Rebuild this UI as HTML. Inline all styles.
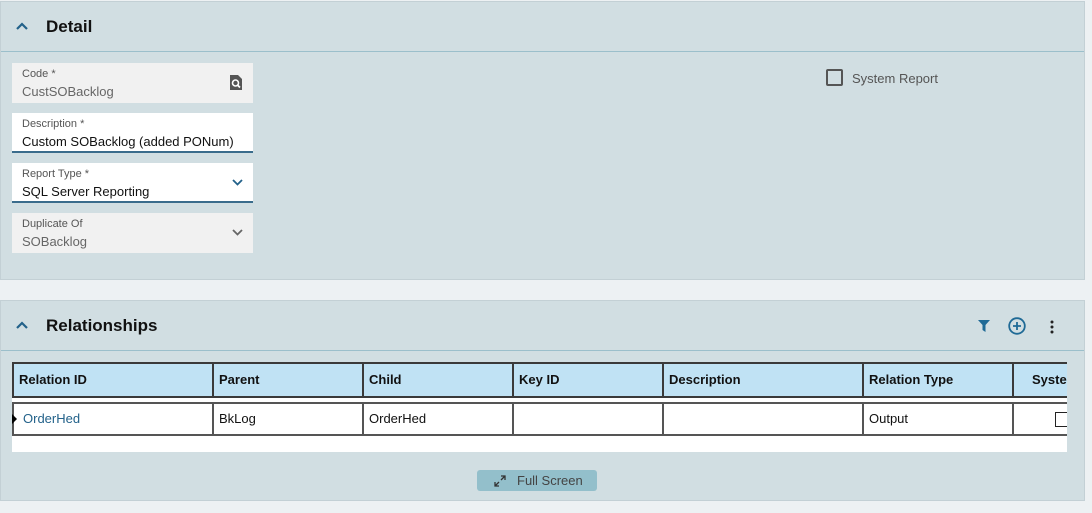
<!DOCTYPE html>
<html><head><style>
*{margin:0;padding:0;box-sizing:border-box}
body{width:1092px;height:513px;background:#edf1f3;font-family:"Liberation Sans",sans-serif;position:relative;overflow:hidden}
.panel{position:absolute;left:0;width:1085px;background:#d1dee2;border:1px solid #c3d0d5}
.hdr{position:absolute;left:0;right:0;top:0;height:50px;border-bottom:1px solid #9bbfcb}
.hdr .t{position:absolute;left:45px;top:15px;font-size:17px;font-weight:bold;color:#111}
.chev{position:absolute;left:15px;top:20px}
.f{position:absolute;left:11px;width:241px;height:40px;background:#fff}
.f.ro{background:#f1f1f1}
.f .l{position:absolute;left:10px;top:5px;font-size:11px;color:#555}
.f .v{position:absolute;left:10px;top:21px;font-size:13px;color:#111}
.f.ro .v{color:#666}
.f.ul{border-bottom:2px solid #3a6c8c}
.dd{position:absolute;right:10px;top:16px}
.row{position:absolute;left:0;width:1200px;border:2px solid #3a3a3a;border-right:none}
.c{position:absolute;top:0;bottom:0;border-left:2px solid #3a3a3a;padding-left:5px;font-size:13px;color:#111;white-space:nowrap}
.c:first-child{border-left:none}
.h{background:#c0e2f4;height:36px}
.h .c{font-weight:bold;line-height:32px}
.b{background:#fff;height:34px;top:40px;border-color:#555}
.b .c{line-height:30px;border-color:#555}
</style></head><body>
<div class="panel" style="top:1px;height:279px">
 <div class="hdr"><svg class="chev" width="12" height="8" viewBox="0 0 12 8"><path d="M1 7L6 2L11 7" stroke="#23628a" stroke-width="2.2" fill="none"/></svg><div class="t">Detail</div></div>
 <div class="f ro" style="top:61px"><div class="l">Code *</div><div class="v">CustSOBacklog</div>
  <svg style="position:absolute;right:11px;top:12px" width="13" height="15" viewBox="0 0 13 15"><path d="M1 0H9L13 4V15H1Z" fill="#555"/><circle cx="6.5" cy="8" r="3" stroke="#fff" stroke-width="1.6" fill="none"/><path d="M8.5 10L11 12.5" stroke="#fff" stroke-width="1.8"/></svg></div>
 <div class="f ul" style="top:111px"><div class="l">Description *</div><div class="v">Custom SOBacklog (added PONum)</div></div>
 <div class="f ul" style="top:161px"><div class="l">Report Type *</div><div class="v">SQL Server Reporting</div><svg class="dd" width="11" height="7" viewBox="0 0 11 7"><path d="M1 1L5.5 5.5L10 1" stroke="#23628a" stroke-width="1.8" fill="none"/></svg></div>
 <div class="f ro" style="top:211px"><div class="l">Duplicate Of</div><div class="v">SOBacklog</div><svg class="dd" width="11" height="7" viewBox="0 0 11 7"><path d="M1 1L5.5 5.5L10 1" stroke="#666" stroke-width="1.8" fill="none"/></svg></div>
 <div style="position:absolute;left:825px;top:67px;width:17px;height:17px;border:2px solid #555;border-radius:2px"></div>
 <div style="position:absolute;left:851px;top:69px;font-size:13px;color:#555">System Report</div>
</div>
<div class="panel" style="top:300px;height:201px">
 <div class="hdr"><svg class="chev" width="12" height="8" viewBox="0 0 12 8"><path d="M1 7L6 2L11 7" stroke="#23628a" stroke-width="2.2" fill="none"/></svg><div class="t">Relationships</div>
  <svg style="position:absolute;left:977px;top:19px" width="12" height="12" viewBox="0 0 12 12"><path d="M0 0H12L7.5 5V12L4.5 10V5Z" fill="#1f6a96"/></svg>
  <svg style="position:absolute;left:1007px;top:16px" width="18" height="18" viewBox="0 0 18 18"><circle cx="9" cy="9" r="7.8" stroke="#1f6a96" stroke-width="1.8" fill="none"/><path d="M9 5V13M5 9H13" stroke="#1f6a96" stroke-width="1.8"/></svg>
  <svg style="position:absolute;left:1049px;top:19px" width="4" height="14" viewBox="0 0 4 14"><circle cx="2" cy="2" r="1.5" fill="#222"/><circle cx="2" cy="7" r="1.5" fill="#222"/><circle cx="2" cy="12" r="1.5" fill="#222"/></svg>
 </div>
 <div style="position:absolute;left:11px;top:61px;width:1055px;height:90px;background:#fff;overflow:hidden">
  <div class="row h">
   <div class="c" style="left:0;width:200px">Relation ID</div>
   <div class="c" style="left:198px;width:150px">Parent</div>
   <div class="c" style="left:348px;width:150px">Child</div>
   <div class="c" style="left:498px;width:150px">Key ID</div>
   <div class="c" style="left:648px;width:200px">Description</div>
   <div class="c" style="left:848px;width:150px">Relation Type</div>
   <div class="c" style="left:998px;width:150px;padding-left:18px">System</div>
  </div>
  <div class="row b">
   <div class="c" style="left:0;width:200px;color:#23628a;padding-left:9px"><span style="position:absolute;left:-2px;top:10px;border-left:5px solid #000;border-top:5px solid transparent;border-bottom:5px solid transparent"></span>OrderHed</div>
   <div class="c" style="left:198px;width:150px">BkLog</div>
   <div class="c" style="left:348px;width:150px">OrderHed</div>
   <div class="c" style="left:498px;width:150px"></div>
   <div class="c" style="left:648px;width:200px"></div>
   <div class="c" style="left:848px;width:150px">Output</div>
   <div class="c" style="left:998px;width:150px"><span style="position:absolute;left:41px;top:8px;width:15px;height:15px;border:1.5px solid #222"></span></div>
  </div>
 </div>
 <div style="position:absolute;left:476px;top:169px;width:120px;height:21px;background:#93bfcb;border-radius:3px;font-size:13px;color:#444">
  <svg style="position:absolute;left:17px;top:5px" width="12" height="12" viewBox="0 0 12 12"><path d="M7 1H11V5M11 1L7 5M5 11H1V7M1 11L5 7" stroke="#333" stroke-width="1.3" fill="none"/></svg>
  <span style="position:absolute;left:40px;top:3px">Full Screen</span></div>
</div>
</body></html>
